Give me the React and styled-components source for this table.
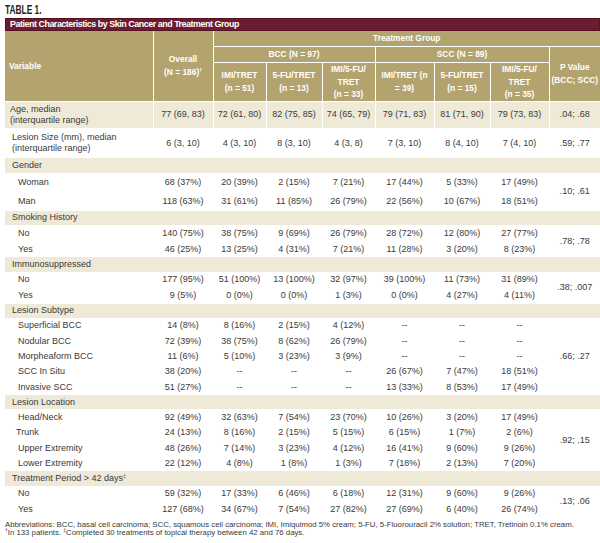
import React from "react";
import styled, { createGlobalStyle } from "styled-components";

const Global = createGlobalStyle`
  html, body { margin: 0; padding: 0; background: #fff; }
  body { font-family: "Liberation Sans", Arial, sans-serif; }
`;

const Page = styled.div`
  padding: 3px 0 0 5px;
  width: 595px;
`;

const TableLabel = styled.div`
  font-family: "Liberation Sans", Arial, sans-serif;
  font-weight: 700;
  font-size: 13.5px;
  line-height: 14px;
  color: #2a1e21;
  height: 15px;
  transform: scaleX(0.62);
  transform-origin: left center;
  white-space: nowrap;
`;

const TitleBar = styled.div`
  background: #6b1c31;
  border: 1px solid #55111f;
  color: #fff;
  font-weight: 700;
  font-size: 8.9px;
  line-height: 11px;
  height: 11px;
  padding: 0 4px;
  white-space: nowrap;
  letter-spacing: -0.45px;
`;

const Table = styled.table`
  width: 595px;
  border-collapse: collapse;
  table-layout: fixed;
  font-size: 9px;
  color: #3a3a3a;
`;

const HeadCell = styled.th`
  background: #b3a36e;
  color: #fff;
  font-weight: 700;
  font-size: 8.4px;
  line-height: 12.5px;
  border: 1px solid #fff;
  border-top: 0;
  text-align: ${(p) => (p.$left ? "left" : "center")};
  padding: 0 ${(p) => (p.$left ? "4px" : "2px")};
  height: ${(p) => p.$h || 14}px;
  vertical-align: middle;
  &:first-child { border-left: 0; }
  &:last-child { border-right: 0; }
`;

const Row = styled.tr`
  background: ${(p) => (p.$shade ? "#efe9d8" : "#fff")};
  height: ${(p) => p.$h}px;
`;

const Cell = styled.td`
  text-align: center;
  vertical-align: middle;
  padding: 0 2px;
  line-height: 11px;
  white-space: nowrap;
  border-left: 1px solid #fff;
  border-right: 1px solid #fff;
  &:first-child { border-left: 0; }
  &:last-child { border-right: 0; }
`;

const LabelCell = styled(Cell)`
  text-align: left;
  padding-left: ${(p) => p.$indent}px;
`;

const BandCell = styled.td`
  text-align: left;
  padding: 0 0 0 7px;
  line-height: 11px;
  white-space: nowrap;
`;

const Sup = styled.sup`
  font-size: 5px;
  line-height: 0;
  vertical-align: 3px;
`;

const Notes = styled.div`
  margin-top: 3px;
  font-size: 7.8px;
  line-height: 8.5px;
  color: #3a3a3a;
  white-space: nowrap;
`;

const widths = [148, 60, 53, 56, 53, 59, 56, 59, 51];

const groups = [
  {
    title: "Gender",
    p: ".10; .61",
    h: 19,
    rows: [
      ["Woman", "68 (37%)", "20 (39%)", "2 (15%)", "7 (21%)", "17 (44%)", "5 (33%)", "17 (49%)"],
      ["Man", "118 (63%)", "31 (61%)", "11 (85%)", "26 (79%)", "22 (56%)", "10 (67%)", "18 (51%)"],
    ],
  },
  {
    title: "Smoking History",
    p: ".78; .78",
    h: 16,
    rows: [
      ["No", "140 (75%)", "38 (75%)", "9 (69%)", "26 (79%)", "28 (72%)", "12 (80%)", "27 (77%)"],
      ["Yes", "46 (25%)", "13 (25%)", "4 (31%)", "7 (21%)", "11 (28%)", "3 (20%)", "8 (23%)"],
    ],
  },
  {
    title: "Immunosuppressed",
    p: ".38; .007",
    h: 16,
    rows: [
      ["No", "177 (95%)", "51 (100%)", "13 (100%)", "32 (97%)", "39 (100%)", "11 (73%)", "31 (89%)"],
      ["Yes", "9 (5%)", "0 (0%)", "0 (0%)", "1 (3%)", "0 (0%)", "4 (27%)", "4 (11%)"],
    ],
  },
  {
    title: "Lesion Subtype",
    p: ".66; .27",
    h: 15.4,
    rows: [
      ["Superficial BCC", "14 (8%)", "8 (16%)", "2 (15%)", "4 (12%)", "--", "--", "--"],
      ["Nodular BCC", "72 (39%)", "38 (75%)", "8 (62%)", "26 (79%)", "--", "--", "--"],
      ["Morpheaform BCC", "11 (6%)", "5 (10%)", "3 (23%)", "3 (9%)", "--", "--", "--"],
      ["SCC In Situ", "38 (20%)", "--", "--", "--", "26 (67%)", "7 (47%)", "18 (51%)"],
      ["Invasive SCC", "51 (27%)", "--", "--", "--", "13 (33%)", "8 (53%)", "17 (49%)"],
    ],
  },
  {
    title: "Lesion Location",
    p: ".92; .15",
    h: 15.5,
    rows: [
      ["Head/Neck", "92 (49%)", "32 (63%)", "7 (54%)", "23 (70%)", "10 (26%)", "3 (20%)", "17 (49%)"],
      ["Trunk", "24 (13%)", "8 (16%)", "2 (15%)", "5 (15%)", "6 (15%)", "1 (7%)", "2 (6%)"],
      ["Upper Extremity", "48 (26%)", "7 (14%)", "3 (23%)", "4 (12%)", "16 (41%)", "9 (60%)", "9 (26%)"],
      ["Lower Extremity", "22 (12%)", "4 (8%)", "1 (8%)", "1 (3%)", "7 (18%)", "2 (13%)", "7 (20%)"],
    ],
  },
  {
    title: (
      <>
        Treatment Period &gt; 42 days<Sup>‡</Sup>
      </>
    ),
    p: ".13; .06",
    h: 16,
    rows: [
      ["No", "59 (32%)", "17 (33%)", "6 (46%)", "6 (18%)", "12 (31%)", "9 (60%)", "9 (26%)"],
      ["Yes", "127 (68%)", "34 (67%)", "7 (54%)", "27 (82%)", "27 (69%)", "6 (40%)", "26 (74%)"],
    ],
  },
];

function Group({ g }) {
  return (
    <>
      <Row $shade $h={14.5}>
        <BandCell colSpan={9}>{g.title}</BandCell>
      </Row>
      {g.rows.map((r, i) => (
        <Row key={i} $h={g.h}>
          <LabelCell $indent={r[0] === "Trunk" ? 11 : 13}>{r[0]}</LabelCell>
          {r.slice(1).map((v, j) => (
            <Cell key={j}>{v}</Cell>
          ))}
          {i === 0 && <Cell rowSpan={g.rows.length}>{g.p}</Cell>}
        </Row>
      ))}
    </>
  );
}

export default function App() {
  return (
    <>
      <Global />
      <Page>
        <TableLabel>TABLE 1.</TableLabel>
        <TitleBar>Patient Characteristics by Skin Cancer and Treatment Group</TitleBar>
        <Table>
          <colgroup>
            {widths.map((w, i) => (
              <col key={i} style={{ width: w }} />
            ))}
          </colgroup>
          <thead>
            <tr>
              <HeadCell rowSpan={3} $left>Variable</HeadCell>
              <HeadCell rowSpan={3}>
                Overall
                <br />
                (N = 186)<Sup>†</Sup>
              </HeadCell>
              <HeadCell colSpan={7} $h={15}>Treatment Group</HeadCell>
            </tr>
            <tr>
              <HeadCell colSpan={3} $h={15}>BCC (N = 97)</HeadCell>
              <HeadCell colSpan={3} $h={15}>SCC (N = 89)</HeadCell>
              <HeadCell rowSpan={2}>
                P Value
                <br />
                (BCC; SCC)
              </HeadCell>
            </tr>
            <tr>
              <HeadCell $h={37}>IMI/TRET<br />(n = 51)</HeadCell>
              <HeadCell $h={37}>5-FU/TRET<br />(n = 13)</HeadCell>
              <HeadCell $h={37}>IMI/5-FU/<br />TRET<br />(n = 33)</HeadCell>
              <HeadCell $h={37}>IMI/TRET (n<br />= 39)</HeadCell>
              <HeadCell $h={37}>5-FU/TRET<br />(n = 15)</HeadCell>
              <HeadCell $h={37}>IMI/5-FU/<br />TRET<br />(n = 35)</HeadCell>
            </tr>
          </thead>
          <tbody>
            <Row $shade $h={27}>
              <LabelCell $indent={5}>
                Age, median
                <br />
                (interquartile range)
              </LabelCell>
              <Cell>77 (69, 83)</Cell>
              <Cell>72 (61, 80)</Cell>
              <Cell>82 (75, 85)</Cell>
              <Cell>74 (65, 79)</Cell>
              <Cell>79 (71, 83)</Cell>
              <Cell>81 (71, 90)</Cell>
              <Cell>79 (73, 83)</Cell>
              <Cell>.04; .68</Cell>
            </Row>
            <Row $h={30}>
              <LabelCell $indent={7}>
                Lesion Size (mm), median
                <br />
                (interquartile range)
              </LabelCell>
              <Cell>6 (3, 10)</Cell>
              <Cell>4 (3, 10)</Cell>
              <Cell>8 (3, 10)</Cell>
              <Cell>4 (3, 8)</Cell>
              <Cell>7 (3, 10)</Cell>
              <Cell>8 (4, 10)</Cell>
              <Cell>7 (4, 10)</Cell>
              <Cell>.59; .77</Cell>
            </Row>
            {groups.map((g, i) => (
              <Group key={i} g={g} />
            ))}
          </tbody>
        </Table>
        <Notes>
          Abbreviations: BCC, basal cell carcinoma; SCC, squamous cell carcinoma; IMI, Imiquimod 5% cream; 5-FU, 5-Fluorouracil 2% solution; TRET, Tretinoin 0.1% cream.
          <br />
          <Sup>†</Sup>In 133 patients. <Sup>‡</Sup>Completed 30 treatments of topical therapy between 42 and 76 days.
        </Notes>
      </Page>
    </>
  );
}
